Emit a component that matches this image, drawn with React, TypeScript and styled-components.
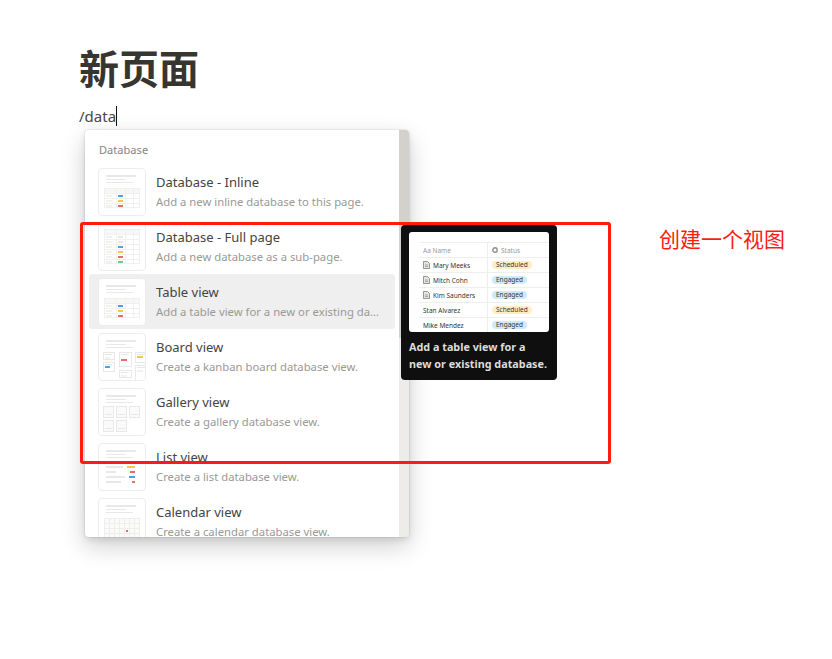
import { ReactNode } from 'react';
import styled, { createGlobalStyle } from 'styled-components';

const Global = createGlobalStyle`
	html, body {
		margin: 0;
		padding: 0;
		background: #fff;
	}
	body {
		font-family: 'Noto Sans', 'Noto Sans CJK SC', sans-serif;
		color: #37352f;
	}
`;

const Page = styled.div`
	position: relative;
	width: 832px;
	height: 659px;
	padding: 41px 0 0 79px;
	box-sizing: border-box;
	overflow: hidden;
`;

const Title = styled.h1`
	margin: 0;
	font-family: 'Noto Sans CJK SC', sans-serif;
	font-size: 40px;
	line-height: 52px;
	font-weight: 700;
	color: #37352f;
`;

const Line = styled.div`
	margin-top: 11px;
	font-size: 15px;
	line-height: 24px;
	color: #4a4843;
	display: flex;
	align-items: center;
`;

const Caret = styled.span`
	display: inline-block;
	width: 1px;
	height: 20px;
	background: #111;
`;

const Menu = styled.div`
	position: absolute;
	left: 85px;
	top: 130px;
	width: 324px;
	height: 407px;
	display: flex;
	background: #fff;
	border-radius: 4px;
	overflow: hidden;
	box-shadow: 0 0 0 1px rgba(15, 15, 15, 0.05), 0 3px 6px rgba(15, 15, 15, 0.1), 0 9px 24px rgba(15, 15, 15, 0.2);
`;

const List = styled.div`
	flex: 1;
	min-width: 0;
	padding: 0 4px;
`;

const Heading = styled.div`
	height: 34px;
	padding: 12px 0 0 10px;
	box-sizing: border-box;
	font-size: 11px;
	line-height: 16px;
	letter-spacing: 0.05px;
	color: #85847f;
`;

const Row = styled.div<{ $active?: boolean }>`
	display: flex;
	height: 55px;
	padding: 4px 13px 3px 9px;
	box-sizing: border-box;
	gap: 10px;
	border-radius: 3px;
	background: ${({ $active }) => ($active ? '#efefef' : 'transparent')};
`;

const Thumb = styled.div`
	flex: none;
	width: 48px;
	height: 48px;
	box-sizing: border-box;
	border: 1px solid #ececeb;
	border-radius: 4px;
	background: #fff;
	overflow: hidden;
	svg {
		display: block;
		margin: -1px;
	}
`;

const RowText = styled.div`
	flex: 1;
	min-width: 0;
	padding-top: 4px;
`;

const RowTitle = styled.div`
	margin-bottom: 1px;
	font-size: 13px;
	line-height: 20px;
	color: #45433e;
`;

const RowDesc = styled.div`
	font-size: 11.3px;
	line-height: 18px;
	color: #9a9995;
	white-space: nowrap;
	overflow: hidden;
	text-overflow: ellipsis;
`;

const Track = styled.div`
	flex: none;
	width: 10px;
	background: #edece9;
`;

const TrackThumb = styled.div`
	height: 208px;
	background: #d3d1cb;
`;

const Tooltip = styled.div`
	position: absolute;
	left: 401px;
	top: 225px;
	width: 156px;
	height: 155px;
	box-sizing: border-box;
	padding: 7px 8px;
	background: #0f0f0f;
	border-radius: 4px;
`;

const Preview = styled.div`
	height: 100px;
	background: #fff;
	border-radius: 3px;
	overflow: hidden;
	padding: 10px 0 0 10px;
	box-sizing: border-box;
	font-size: 6.5px;
	color: #37352f;
`;

const PreviewRow = styled.div<{ $head?: boolean }>`
	display: grid;
	grid-template-columns: 69px 1fr;
	height: 15px;
	border-top: 1px solid #eeeeed;
	box-sizing: border-box;
	color: ${({ $head }) => ($head ? '#9b9a97' : '#37352f')};
`;

const NameCell = styled.div`
	display: flex;
	align-items: center;
	gap: 3px;
	padding-left: 4px;
	border-right: 1px solid #eeeeed;
	white-space: nowrap;
`;

const StatusCell = styled.div`
	display: flex;
	align-items: center;
	gap: 3px;
	padding-left: 4px;
`;

const Tag = styled.span<{ $bg: string }>`
	padding: 0 4px;
	height: 8px;
	line-height: 8px;
	border-radius: 4px;
	background: ${({ $bg }) => $bg};
`;

const Caption = styled.div`
	margin-top: 6px;
	font-size: 10.8px;
	line-height: 17px;
	font-weight: 700;
	white-space: nowrap;
	color: #dcdcdb;
`;

const Frame = styled.div`
	position: absolute;
	left: 80px;
	top: 222px;
	width: 531px;
	height: 242px;
	box-sizing: border-box;
	border: 3px solid #ff1a12;
	border-radius: 3px;
	pointer-events: none;
`;

const Note = styled.div`
	position: absolute;
	left: 659px;
	top: 224px;
	font-family: 'Noto Sans CJK SC', sans-serif;
	font-size: 21px;
	line-height: 28px;
	color: #ff1a12;
`;

const GREY = '#e8e8e7';
const LINE = '#f0f0ef';
const RED = '#eb6a6a';
const YELLOW = '#f5c84c';
const BLUE = '#45a5e0';
const GREEN = '#7cc47f';

const Drawing = ({ children }: { children: ReactNode }) => (
	<svg width={48} height={48} viewBox='0 0 48 48'>
		{children}
	</svg>
);

const Header = () => (
	<>
		<rect x={8} y={7} width={30} height={2} fill={GREY} />
		<rect x={8} y={11} width={20} height={1} fill={GREY} />
		<rect x={8} y={14} width={27} height={1} fill={GREY} />
	</>
);

const Grid = ({ y, rows }: { y: number; rows: number }) => {
	const bottom = y + 5 + rows * 5;
	return (
		<>
			<rect x={6} y={y} width={36} height={5} fill='#f7f7f6' />
			<rect x={6.5} y={y + 0.5} width={35} height={bottom - y - 1} fill='none' stroke={LINE} />
			{[18, 27, 35].map((x) => (
				<rect key={x} x={x} y={y} width={1} height={bottom - y} fill={LINE} />
			))}
			{Array.from({ length: rows }, (_, i) => (
				<rect key={i} x={6} y={y + 5 + i * 5} width={36} height={1} fill={LINE} />
			))}
			{Array.from({ length: rows }, (_, i) => (
				<rect key={i} x={8} y={y + 7 + i * 5} width={6} height={2} fill={LINE} />
			))}
		</>
	);
};

const Tags = ({ y, colors }: { y: number; colors: string[] }) => (
	<>
		{colors.map((c, i) => (
			<rect key={i} x={20} y={y + i * 5} width={5} height={2} fill={c} />
		))}
	</>
);

const TableArt = () => (
	<Drawing>
		<Header />
		<Grid y={20} rows={3} />
		<Tags y={27} colors={[BLUE, YELLOW, RED]} />
	</Drawing>
);

const FullArt = () => (
	<Drawing>
		<Grid y={6} rows={6} />
		<Tags y={13} colors={[GREY, GREY]} />
		<Tags y={23} colors={[BLUE, YELLOW, RED, GREEN]} />
	</Drawing>
);

type CardProps = { x: number; y: number; w: number; h: number; color?: string; tagY?: number };

const Card = ({ x, y, w, h, color, tagY = 5 }: CardProps) => (
	<>
		<rect x={x + 0.5} y={y + 0.5} width={w} height={h} fill='#fff' stroke={GREY} />
		<rect x={x + 2} y={y + 2} width={w - 4} height={1} fill={GREY} />
		<rect x={x + 2} y={y + tagY} width={w - 6} height={2} fill={color || '#f1f1f0'} />
	</>
);

const BoardArt = () => (
	<Drawing>
		<Header />
		<Card x={5} y={19} w={11} h={7} />
		<Card x={5} y={29} w={11} h={9} color={BLUE} tagY={4} />
		<Card x={21} y={19} w={12} h={14} color={RED} tagY={7} />
		<Card x={21} y={37} w={12} h={7} />
		<Card x={37} y={19} w={12} h={10} color={YELLOW} tagY={4} />
		<Card x={37} y={32} w={12} h={15} />
	</Drawing>
);

const GalleryArt = () => (
	<Drawing>
		<Header />
		{[5, 18, 31].map((x) => (
			<g key={x}>
				<rect x={x + 0.5} y={18.5} width={10} height={11} fill='#fafafa' stroke={GREY} />
				<rect x={x + 2} y={26} width={7} height={1} fill={GREY} />
			</g>
		))}
		{[5, 18].map((x) => (
			<g key={x}>
				<rect x={x + 0.5} y={32.5} width={10} height={11} fill='#fafafa' stroke={GREY} />
				<rect x={x + 2} y={40} width={7} height={1} fill={GREY} />
			</g>
		))}
	</Drawing>
);

const ListArt = () => (
	<Drawing>
		<Header />
		<rect x={8} y={23} width={17} height={2} fill={GREY} />
		<rect x={29} y={23} width={8} height={2} fill={YELLOW} />
		<rect x={8} y={28} width={10} height={2} fill={GREY} />
		<rect x={32} y={28} width={5} height={2} fill={RED} />
		<rect x={8} y={33} width={19} height={2} fill={GREY} />
		<rect x={31} y={33} width={6} height={2} fill={BLUE} />
		<rect x={8} y={38} width={15} height={2} fill={GREY} />
		<rect x={34} y={38} width={3} height={2} fill={RED} />
	</Drawing>
);

const CalendarArt = () => (
	<Drawing>
		<Header />
		<rect x={6} y={20} width={36} height={28} fill='#fbfbfa' />
		{[6, 11, 16, 21, 26, 31, 36, 41].map((x) => (
			<rect key={x} x={x} y={20} width={1} height={28} fill='#eeeeed' />
		))}
		{[20, 25, 30, 35, 40, 45].map((y) => (
			<rect key={y} x={6} y={y} width={36} height={1} fill='#eeeeed' />
		))}
		<rect x={28} y={32} width={2} height={2} fill={RED} />
	</Drawing>
);

const rows = [
	{ title: 'Database - Inline', desc: 'Add a new inline database to this page.', art: <TableArt /> },
	{ title: 'Database - Full page', desc: 'Add a new database as a sub-page.', art: <FullArt /> },
	{ title: 'Table view', desc: 'Add a table view for a new or existing database.', art: <TableArt />, active: true },
	{ title: 'Board view', desc: 'Create a kanban board database view.', art: <BoardArt /> },
	{ title: 'Gallery view', desc: 'Create a gallery database view.', art: <GalleryArt /> },
	{ title: 'List view', desc: 'Create a list database view.', art: <ListArt /> },
	{ title: 'Calendar view', desc: 'Create a calendar database view.', art: <CalendarArt /> },
];

const DocIcon = () => (
	<svg width={7} height={8} viewBox='0 0 7 8'>
		<path d='M0.5 0.5H4.5L6.5 2.5V7.5H0.5Z' fill='#e4e4e3' stroke='#6f6e69' strokeWidth={0.7} />
		<path d='M2 4H5M2 5.5H5' stroke='#6f6e69' strokeWidth={0.5} />
	</svg>
);

const SCHEDULED = '#fdecc8';
const ENGAGED = '#cdeaf9';

const people = [
	{ name: 'Mary Meeks', status: 'Scheduled', doc: true },
	{ name: 'Mitch Cohn', status: 'Engaged', doc: true },
	{ name: 'Kim Saunders', status: 'Engaged', doc: true },
	{ name: 'Stan Alvarez', status: 'Scheduled', doc: false },
	{ name: 'Mike Mendez', status: 'Engaged', doc: false },
];

const App = () => (
	<Page>
		<Global />
		<Title>新页面</Title>
		<Line>
			/data
			<Caret />
		</Line>
		<Menu>
			<List>
				<Heading>Database</Heading>
				{rows.map((r) => (
					<Row key={r.title} $active={r.active}>
						<Thumb>{r.art}</Thumb>
						<RowText>
							<RowTitle>{r.title}</RowTitle>
							<RowDesc>{r.desc}</RowDesc>
						</RowText>
					</Row>
				))}
			</List>
			<Track>
				<TrackThumb />
			</Track>
		</Menu>
		<Tooltip>
			<Preview>
				<PreviewRow $head>
					<NameCell>Aa Name</NameCell>
					<StatusCell>
						<svg width={6} height={6} viewBox='0 0 6 6'>
							<circle cx={3} cy={3} r={2.2} fill='none' stroke='#8d8c88' strokeWidth={1.4} />
						</svg>
						Status
					</StatusCell>
				</PreviewRow>
				{people.map((p) => (
					<PreviewRow key={p.name}>
						<NameCell>
							{p.doc && <DocIcon />}
							{p.name}
						</NameCell>
						<StatusCell>
							<Tag $bg={p.status === 'Scheduled' ? SCHEDULED : ENGAGED}>{p.status}</Tag>
						</StatusCell>
					</PreviewRow>
				))}
			</Preview>
			<Caption>
				Add a table view for a
				<br />
				new or existing database.
			</Caption>
		</Tooltip>
		<Frame />
		<Note>创建一个视图</Note>
	</Page>
);

export default App;
